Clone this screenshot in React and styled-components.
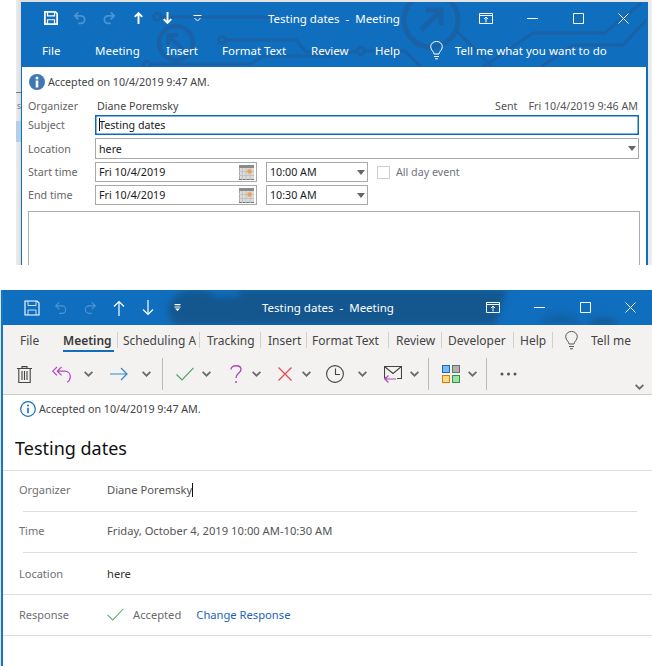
import React from "react";
import styled, { createGlobalStyle } from "styled-components";

const Global = createGlobalStyle`
  html, body { margin: 0; padding: 0; background: #fff; }
  body { font-family: "Noto Sans", "Open Sans", Arial, sans-serif; overflow: hidden; }
`;

const Page = styled.div`
  width: 652px;
  height: 666px;
  overflow: hidden;
  display: flex;
  flex-direction: column;
  background: #fff;
`;

const TopScene = styled.div`
  position: relative;
  height: 265px;
  padding: 2px 4px 0 21px;
  box-sizing: border-box;
  background: linear-gradient(to right, #fff 16px, #ececec 16px, #dedede 21px, #e6e6e6 647px, #f0f0f0 652px);
`;

const SideHighlight = styled.div`
  position: absolute;
  left: 16px;
  top: 121px;
  width: 5px;
  height: 21px;
  background: #b4cfe6;
`;

const SideRule = styled.div`
  position: absolute;
  left: 16px;
  top: 92px;
  width: 5px;
  height: 1px;
  background: #777;
`;

const SideGlyph = styled.span`
  position: absolute;
  left: 17px;
  top: 100px;
  font-size: 7px;
  line-height: 14px;
  color: #666;
`;

const TopWindow = styled.div`
  height: 263px;
  display: flex;
  flex-direction: column;
  overflow: hidden;
  background: #fff;
  border-left: 1px solid #106ebe;
  border-right: 2px solid #106ebe;
`;

const Chrome = styled.div`
  position: relative;
  height: ${p => p.$h}px;
  flex: none;
  background: #106ebe;
  color: #fff;
  overflow: hidden;
`;

const Decor = styled.svg`
  position: absolute;
  left: 0;
  top: 0;
  filter: ${p => (p.$blur ? `blur(${p.$blur}px)` : "none")};
`;

const TitleRow = styled.div`
  position: relative;
  display: flex;
  align-items: center;
  height: ${p => p.$h}px;
`;

const TitleBtn = styled.span`
  display: flex;
  flex: none;
  margin-left: ${p => p.$ml}px;
`;

const TitleText = styled.span`
  flex: none;
  margin-left: ${p => p.$ml}px;
  font-size: 11.5px;
  white-space: pre;
  color: #fff;
`;

const BlueTabs = styled.div`
  position: relative;
  display: flex;
  align-items: center;
  height: 33px;
  font-size: 11.5px;
`;

const BlueTab = styled.span`
  flex: none;
  width: ${p => p.$w}px;
  margin-left: ${p => p.$ml || 0}px;
  white-space: nowrap;
  display: flex;
  align-items: center;
`;

const Form = styled.div`
  flex: 1;
  padding-left: 6px;
  display: flex;
  flex-direction: column;
  font-size: 10.7px;
  color: #262626;
`;

const InfoRow = styled.div`
  display: flex;
  align-items: center;
  gap: 3px;
  height: 16px;
  margin-top: ${p => p.$mt}px;
  margin-left: ${p => p.$ml}px;
  color: #444;
  font-size: 10.7px;
`;

const FormRow = styled.div`
  display: flex;
  align-items: center;
  height: ${p => p.$h}px;
  margin-top: ${p => p.$mt || 0}px;
`;

const Label = styled.span`
  flex: none;
  width: 67px;
  color: #666;
`;

const SentBlock = styled.span`
  display: flex;
  gap: 11px;
  margin-left: auto;
  margin-right: 8px;
  color: #555;
`;

const ValueText = styled.span`
  margin-left: 2px;
  color: #444;
`;

const Field = styled.div`
  position: relative;
  box-sizing: border-box;
  height: 100%;
  width: ${p => (p.$w ? `${p.$w}px` : "544px")};
  margin-left: ${p => p.$ml || 0}px;
  border: 1px solid ${p => (p.$focus ? "#0a6cb8" : "#a9a9a9")};
  box-shadow: ${p => (p.$focus ? "inset 0 0 0 0.5px #0a6cb8" : "none")};
  display: flex;
  align-items: center;
  justify-content: space-between;
  padding: 0 2px 0 3px;
  color: #1a1a1a;
  white-space: nowrap;
`;

const FieldCaret = styled.span`
  display: inline-block;
  width: 1px;
  height: 13px;
  margin-right: -1px;
  background: #111;
  vertical-align: -2px;
`;

const DropArrow = styled.span`
  display: block;
  width: 0;
  height: 0;
  border-left: 4.5px solid transparent;
  border-right: 4.5px solid transparent;
  border-top: 5px solid #666;
`;

const CheckBox = styled.span`
  box-sizing: border-box;
  flex: none;
  width: 13px;
  height: 13px;
  margin-left: 9px;
  border: 1px solid #cfcfcf;
`;

const CheckLabel = styled.span`
  margin-left: 6px;
  color: #6e7480;
`;

const BodyBox = styled.div`
  box-sizing: border-box;
  width: 612px;
  height: 60px;
  margin: 6px 0 0 0;
  border: 1px solid #a9adb5;
  border-bottom: none;
`;

const Gap = styled.div`
  height: 25px;
  flex: none;
`;

const BottomScene = styled.div`
  flex: 1;
  display: flex;
  background: #e4e4e4;
  padding-left: 1px;
`;

const BottomWindow = styled.div`
  flex: 1;
  min-width: 0;
  display: flex;
  flex-direction: column;
  background: #fff;
  border-left: 2px solid #1478c8;
`;

const LightTabs = styled.div`
  display: flex;
  height: 28px;
  flex: none;
  background: #f3f2f1;
  font-size: 12px;
  color: #444;
`;

const LightTab = styled.div`
  position: relative;
  flex: none;
  box-sizing: border-box;
  width: ${p => p.$w}px;
  padding-left: ${p => p.$pl}px;
  padding-top: 3px;
  display: flex;
  align-items: center;
  white-space: nowrap;
  overflow: hidden;
  ${p => p.$active && "font-weight: 600; color: #3a3a3a;"}
  &::after {
    content: "";
    display: ${p => (p.$sep ? "block" : "none")};
    position: absolute;
    right: 0;
    top: 7px;
    height: 16px;
    width: 1px;
    background: #d2d0ce;
  }
`;

const TabClip = styled.span`
  display: block;
  width: ${p => p.$w}px;
  overflow: hidden;
`;

const Underline = styled.span`
  position: absolute;
  left: 6px;
  top: 25px;
  width: 51px;
  height: 2px;
  background: #106ebe;
`;

const Toolbar = styled.div`
  display: flex;
  align-items: center;
  position: relative;
  height: 42px;
  padding-top: 1px;
  box-sizing: border-box;
  flex: none;
  background: #f3f2f1;
  border-bottom: 1px solid #cfcdcb;
`;

const Tool = styled.span`
  display: flex;
  flex: none;
  margin-left: ${p => p.$ml}px;
`;

const ToolDivider = styled.span`
  flex: none;
  width: 1px;
  height: 32px;
  margin-left: ${p => p.$ml}px;
  background: #bdbbb9;
`;

const Collapse = styled.span`
  display: flex;
  margin-left: auto;
  margin-right: 8px;
  align-self: flex-end;
  margin-bottom: 4px;
`;

const Heading = styled.div`
  box-sizing: border-box;
  height: 53px;
  padding: 9px 0 0 12px;
  display: flex;
  align-items: center;
  font-size: 18px;
  color: #111;
`;

const Separator = styled.div`
  flex: none;
  height: 1px;
  background: #dedede;
  margin: ${p => (p.$inset ? "0 15px 0 20px" : "0")};
`;

const DetailRow = styled.div`
  box-sizing: border-box;
  display: flex;
  align-items: center;
  height: ${p => p.$h}px;
  padding: 0 0 ${p => p.$pb || 0}px 16px;
  font-size: 11.2px;
  color: #555;
`;

const DetailLabel = styled.span`
  flex: none;
  width: 88px;
  font-size: 11px;
  color: #707070;
`;

const DetailValue = styled.span`
  color: ${p => p.$c || "#555"};
`;

const TextCaret = styled.span`
  display: inline-block;
  width: 1px;
  height: 14px;
  background: #111;
  vertical-align: -3px;
`;

const ResponseText = styled.span`
  margin-left: 9px;
  color: #6a6a6a;
`;

const LinkText = styled.span`
  margin-left: 15px;
  color: #1c63b7;
`;

/* icons */
const Save = ({ s = 14, w = 2 }) => (
  <svg width={s} height={s} viewBox="0 0 16 16" fill="none" stroke="#fff" strokeWidth={w}>
    <path d="M1 1h12l2 2v12H1z" />
    <path d="M4 1v4.5h8V1M4 15v-5h8v5" strokeWidth={w * 0.7} />
  </svg>
);
const Undo = ({ flip, s = 14, w = 2 }) => (
  <svg width={s} height={s} viewBox="0 0 16 16" fill="none" stroke="#4f93d2" strokeWidth={w} style={flip ? { transform: "scaleX(-1)" } : undefined}>
    <path d="M6 1.5 2 5.5l4 4M2 5.5h7a4.3 4.3 0 0 1 0 8.7H6" />
  </svg>
);
const ArrowUD = ({ down, w = 2.6, h = 12, iw = 11 }) => (
  <svg width={iw} height={h} viewBox="0 0 12 16" fill="none" stroke="#fff" strokeWidth={w} style={down ? { transform: "scaleY(-1)" } : undefined}>
    <path d="M6 16V1.5M1 6.5l5-5 5 5" />
  </svg>
);
const Customize = () => (
  <svg width="9" height="9" viewBox="0 0 9 9" fill="none" stroke="#fff" strokeWidth="1">
    <path d="M0.5 1.5h8" />
    <path d="M1.5 4l3 3 3-3" />
  </svg>
);
const CustomizeSolid = () => (
  <svg width="7" height="7" viewBox="0 0 7 7" fill="#fff">
    <path d="M.5 0h6v1.200h-6zM.5 2.400h6v1.200h-6zM1 4.600h5L3.500 7z" />
  </svg>
);
const Pin = () => (
  <svg width="14" height="11" viewBox="0 0 14 11" fill="none" stroke="#fff" strokeWidth="1">
    <path d="M.5.5h13v10H.5zM.5 2.500h13M7 9.500V4M5 6l2-2 2 2" />
  </svg>
);
const Minimize = () => (
  <svg width="11" height="11" viewBox="0 0 11 11" stroke="#fff"><path d="M0 5.500h11" /></svg>
);
const Maximize = () => (
  <svg width="11" height="11" viewBox="0 0 11 11" fill="none" stroke="#fff"><path d="M.5.5h10v10H.5z" /></svg>
);
const CloseX = () => (
  <svg width="11" height="11" viewBox="0 0 11 11" stroke="#fff"><path d="M.5.5l10 10M10.500.5l-10 10" /></svg>
);
const Bulb = ({ c = "#fff", w = 13, h = 19 }) => (
  <svg width={w} height={h} viewBox="0 0 13 19" fill="none" stroke={c} strokeWidth="1">
    <path d="M4 13c0-2.500-3.300-3.800-3.300-7.300a5.800 5.300 0 0 1 11.600 0C12.300 9.200 9 10.500 9 13z" />
    <path d="M4 15.500h5M5 17.800h3" />
  </svg>
);
const InfoFilled = () => (
  <svg width="16" height="16" viewBox="0 0 16 16">
    <circle cx="8" cy="8" r="8" fill="#3f78b4" />
    <circle cx="8" cy="4" r="1.500" fill="#fff" />
    <path d="M6.700 6.500h2.600v7H6.700z" fill="#fff" />
  </svg>
);
const InfoLine = () => (
  <svg width="16" height="16" viewBox="0 0 16 16" fill="none">
    <circle cx="8" cy="8" r="7.300" stroke="#106ebe" strokeWidth="1.200" />
    <circle cx="8" cy="4.500" r="1" fill="#106ebe" />
    <path d="M7.200 6.800h1.600v5.500H7.200z" fill="#106ebe" />
  </svg>
);
const Calendar = () => (
  <svg width="15" height="15" viewBox="0 0 15 15">
    <rect width="15" height="15" fill="#dcdcdc" />
    <path d="M0 0h15v3H0z" fill="#8b8b8b" />
    <path d="M0 3v12M0 14.500h15" stroke="#777" />
    <path d="M3.500 3v12M7 3v12M11 3v12M0 6.500h15M0 10.500h15" stroke="#c2c2c2" />
    <rect x="8.500" y="4.500" width="4" height="4" fill="#f19d4d" />
  </svg>
);
const Chev = ({ ml }) => (
  <Tool $ml={ml}>
    <svg width="9" height="6" viewBox="0 0 9 6" fill="none" stroke="#6b6b6b" strokeWidth="1.800">
      <path d="M.6.8l3.900 3.900L8.400.8" />
    </svg>
  </Tool>
);
const Trash = () => (
  <svg width="15" height="17" viewBox="0 0 15 17" fill="none" stroke="#444" strokeWidth="1.100">
    <path d="M0 2.500h15M5 2.500V.6h5v1.900M1.800 2.500v14h11.400v-14M5 5v9M7.500 5v9M10 5v9" />
  </svg>
);
const ReplyAll = () => (
  <svg width="19" height="17" viewBox="0 0 19 17" fill="none" stroke="#b146c2" strokeWidth="1.200">
    <path d="M5 1 .8 5.200 5 9.400M9.500 1 5.300 5.200l4.200 4.200M5.300 5.200h7.200c3.800 0 5.800 2.500 5.800 5.400 0 2.500-1.300 4.600-3 5.700" />
  </svg>
);
const Forward = () => (
  <svg width="18" height="14" viewBox="0 0 18 14" fill="none" stroke="#2f87cf" strokeWidth="1.200">
    <path d="M0 7h17M11 1l6 6-6 6" />
  </svg>
);
const Check = ({ w = 18, h = 14, sw = 1.200 }) => (
  <svg width={w} height={h} viewBox="0 0 18 14" fill="none" stroke="#4aa564" strokeWidth={sw}>
    <path d="M.5 7.500 6 13 17.500.8" />
  </svg>
);
const Question = () => (
  <svg width="12" height="19" viewBox="0 0 12 19" fill="none" stroke="#b146c2" strokeWidth="1.400">
    <path d="M1 4.500C1 2.200 3 .8 6 .8s5 1.500 5 3.700c0 3.500-5 3.800-5 8.500" />
    <circle cx="6" cy="17" r="1" fill="#b146c2" stroke="none" />
  </svg>
);
const RedX = () => (
  <svg width="14" height="14" viewBox="0 0 14 14" stroke="#e8474c" strokeWidth="1.200">
    <path d="M.5.500l13 13M13.500.500l-13 13" />
  </svg>
);
const Clock = () => (
  <svg width="18" height="18" viewBox="0 0 18 18" fill="none" stroke="#444" strokeWidth="1.100">
    <circle cx="9" cy="9" r="8.400" />
    <path d="M9.500 3.500v6H14" />
  </svg>
);
const Envelope = () => (
  <svg width="18" height="17" viewBox="0 0 18 17" fill="none">
    <path d="M3 12H.5V.5h17v12H13M.5.500 9 7.500 17.500.500" stroke="#444" strokeWidth="1.100" />
    <path d="M12 13H.8M4.500 9.500.8 13l3.700 3.500" stroke="#b146c2" strokeWidth="1.100" />
  </svg>
);
const Tiles = () => (
  <svg width="18" height="18" viewBox="0 0 18 18" strokeWidth="1">
    <rect x=".5" y=".5" width="7" height="7" fill="#7fbaec" stroke="#106ebe" />
    <rect x="10.500" y=".5" width="7" height="7" fill="#b4b2b0" stroke="#6e6e6e" />
    <rect x=".5" y="10.500" width="7" height="7" fill="#fbd98c" stroke="#e07b00" />
    <rect x="10.500" y="10.500" width="7" height="7" fill="#9fe0a9" stroke="#2b9a47" />
  </svg>
);
const Dots = () => (
  <svg width="17" height="4" viewBox="0 0 17 4" fill="#555">
    <circle cx="2" cy="2" r="1.500" /><circle cx="8.500" cy="2" r="1.500" /><circle cx="15" cy="2" r="1.500" />
  </svg>
);

const CircuitDecor = () => (
  <Decor width="626" height="65" viewBox="21 2 626 65" fill="none" stroke="#1c5f9f" strokeOpacity="0.75" strokeWidth="3">
    <circle cx="175" cy="43" r="17" strokeWidth="4.500" />
    <path d="M182 50l-14-14M167 45v-10h10" strokeWidth="4" />
    <circle cx="430" cy="20" r="27" strokeWidth="5" />
    <path d="M420 30l19-19M425 10h15v15" strokeWidth="5" />
    <circle cx="156" cy="17" r="3.500" />
    <path d="M160 17h110" />
    <circle cx="221" cy="40" r="3.500" />
    <path d="M225 40h70l10 12h50" />
    <circle cx="360" cy="51" r="3.500" />
    <path d="M364 51h40l16 16" />
    <circle cx="146" cy="65" r="3.500" />
    <path d="M150 64h100l12-8h70" />
    <path d="M455 30l36 37M482 67l50-34h72l36-30" />
    <path d="M540 67l32-22h50l28-30" />
  </Decor>
);

const BlobDecor = () => (
  <Decor $blur={3} width="649" height="35" viewBox="3 290 649 35" fill="#14578f" stroke="none">
    <ellipse cx="196" cy="310" rx="28" ry="20" />
    <ellipse cx="228" cy="312" rx="24" ry="16" />
    <path d="M236 280h274l-18 55H246z" />
    <ellipse cx="560" cy="325" rx="20" ry="12" fillOpacity=".5" />
    <ellipse cx="603" cy="327" rx="16" ry="9" />
  </Decor>
);

export default function App() {
  return (
    <Page>
      <Global />
      <TopScene>
        <SideRule />
        <SideGlyph>S</SideGlyph>
        <SideHighlight />
        <TopWindow>
          <Chrome $h={65}>
            <CircuitDecor />
            <TitleRow $h={32}>
              <TitleBtn $ml={22}><Save /></TitleBtn>
              <TitleBtn $ml={15}><Undo /></TitleBtn>
              <TitleBtn $ml={15}><Undo flip /></TitleBtn>
              <TitleBtn $ml={17}><ArrowUD /></TitleBtn>
              <TitleBtn $ml={18}><ArrowUD down /></TitleBtn>
              <TitleBtn $ml={20}><Customize /></TitleBtn>
              <TitleText $ml={66}>Testing dates  -  Meeting</TitleText>
              <TitleBtn $ml={79}><Pin /></TitleBtn>
              <TitleBtn $ml={34}><Minimize /></TitleBtn>
              <TitleBtn $ml={35}><Maximize /></TitleBtn>
              <TitleBtn $ml={34}><CloseX /></TitleBtn>
            </TitleRow>
            <BlueTabs>
              <BlueTab $ml={20} $w={53}>File</BlueTab>
              <BlueTab $w={71}>Meeting</BlueTab>
              <BlueTab $w={56}>Insert</BlueTab>
              <BlueTab $w={89}>Format Text</BlueTab>
              <BlueTab $w={64}>Review</BlueTab>
              <BlueTab $w={55}>Help</BlueTab>
              <BlueTab $w={25}><Bulb /></BlueTab>
              <BlueTab $w={180}>Tell me what you want to do</BlueTab>
            </BlueTabs>
          </Chrome>
          <Form>
            <InfoRow $mt={7} $ml={1}><InfoFilled />Accepted on 10/4/2019 9:47 AM.</InfoRow>
            <FormRow $h={19} $mt={6}>
              <Label>Organizer</Label>
              <ValueText>Diane Poremsky</ValueText>
              <SentBlock><span>Sent</span><span>Fri 10/4/2019 9:46 AM</span></SentBlock>
            </FormRow>
            <FormRow $h={20}>
              <Label>Subject</Label>
              <Field $focus><span><FieldCaret />Testing dates</span></Field>
            </FormRow>
            <FormRow $h={21} $mt={3}>
              <Label>Location</Label>
              <Field><span>here</span><DropArrow /></Field>
            </FormRow>
            <FormRow $h={20} $mt={3}>
              <Label>Start time</Label>
              <Field $w={162}><span>Fri 10/4/2019</span><Calendar /></Field>
              <Field $w={102} $ml={9}><span>10:00 AM</span><DropArrow /></Field>
              <CheckBox />
              <CheckLabel>All day event</CheckLabel>
            </FormRow>
            <FormRow $h={20} $mt={3}>
              <Label>End time</Label>
              <Field $w={162}><span>Fri 10/4/2019</span><Calendar /></Field>
              <Field $w={102} $ml={9}><span>10:30 AM</span><DropArrow /></Field>
            </FormRow>
            <BodyBox />
          </Form>
        </TopWindow>
      </TopScene>
      <Gap />
      <BottomScene>
        <BottomWindow>
          <Chrome $h={35}>
            <BlobDecor />
            <TitleRow $h={35}>
              <TitleBtn $ml={21}><Save s={16} w={1.1} /></TitleBtn>
              <TitleBtn $ml={14}><Undo w={1.3} /></TitleBtn>
              <TitleBtn $ml={15}><Undo flip w={1.3} /></TitleBtn>
              <TitleBtn $ml={16}><ArrowUD w={1.2} h={16} iw={12} /></TitleBtn>
              <TitleBtn $ml={17}><ArrowUD down w={1.2} h={16} iw={12} /></TitleBtn>
              <TitleBtn $ml={20}><CustomizeSolid /></TitleBtn>
              <TitleText $ml={81}>Testing dates  -  Meeting</TitleText>
              <TitleBtn $ml={92}><Pin /></TitleBtn>
              <TitleBtn $ml={34}><Minimize /></TitleBtn>
              <TitleBtn $ml={35}><Maximize /></TitleBtn>
              <TitleBtn $ml={34}><CloseX /></TitleBtn>
            </TitleRow>
          </Chrome>
          <LightTabs>
            <LightTab $w={54} $pl={17}>File</LightTab>
            <LightTab $w={61} $pl={6} $active $sep>Meeting<Underline /></LightTab>
            <LightTab $w={82} $pl={5} $sep><TabClip $w={73}>Scheduling A</TabClip></LightTab>
            <LightTab $w={61} $pl={7} $sep>Tracking</LightTab>
            <LightTab $w={46} $pl={7} $sep>Insert</LightTab>
            <LightTab $w={82} $pl={5} $sep>Format Text</LightTab>
            <LightTab $w={53} $pl={7} $sep>Review</LightTab>
            <LightTab $w={72} $pl={6} $sep>Developer</LightTab>
            <LightTab $w={39} $pl={6} $sep>Help</LightTab>
            <LightTab $w={38} $pl={12}><Bulb c="#555" /></LightTab>
            <LightTab $w={50} $pl={0}>Tell me</LightTab>
          </LightTabs>
          <Toolbar>
            <Tool $ml={14}><Trash /></Tool>
            <Tool $ml={20}><ReplyAll /></Tool>
            <Chev ml={13} />
            <Tool $ml={17}><Forward /></Tool>
            <Chev ml={14} />
            <ToolDivider $ml={11} />
            <Tool $ml={13}><Check /></Tool>
            <Chev ml={8} />
            <Tool $ml={19}><Question /></Tool>
            <Chev ml={10} />
            <Tool $ml={17}><RedX /></Tool>
            <Chev ml={10} />
            <Tool $ml={15}><Clock /></Tool>
            <Chev ml={14} />
            <Tool $ml={17}><Envelope /></Tool>
            <Chev ml={8} />
            <ToolDivider $ml={9} />
            <Tool $ml={13}><Tiles /></Tool>
            <Chev ml={8} />
            <ToolDivider $ml={9} />
            <Tool $ml={13}><Dots /></Tool>
            <Collapse>
              <svg width="9" height="6" viewBox="0 0 9 6" fill="none" stroke="#6b6b6b" strokeWidth="1.800"><path d="M.6.8l3.900 3.900L8.400.8" /></svg>
            </Collapse>
          </Toolbar>
          <InfoRow $mt={6} $ml={17}><InfoLine />Accepted on 10/4/2019 9:47 AM.</InfoRow>
          <Heading>Testing dates</Heading>
          <Separator />
          <DetailRow $h={40} $pb={3}>
            <DetailLabel>Organizer</DetailLabel>
            <DetailValue>Diane Poremsky<TextCaret /></DetailValue>
          </DetailRow>
          <Separator $inset />
          <DetailRow $h={40} $pb={3}>
            <DetailLabel>Time</DetailLabel>
            <DetailValue>Friday, October 4, 2019 10:00 AM-10:30 AM</DetailValue>
          </DetailRow>
          <Separator $inset />
          <DetailRow $h={41}>
            <DetailLabel>Location</DetailLabel>
            <DetailValue $c="#333">here</DetailValue>
          </DetailRow>
          <Separator />
          <DetailRow $h={40} $pb={1}>
            <DetailLabel>Response</DetailLabel>
            <Check w={17} h={13} sw={1.100} />
            <ResponseText>Accepted</ResponseText>
            <LinkText>Change Response</LinkText>
          </DetailRow>
          <Separator />
        </BottomWindow>
      </BottomScene>
    </Page>
  );
}
